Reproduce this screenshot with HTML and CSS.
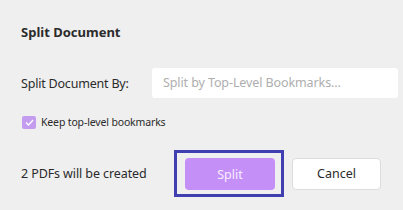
FILE: index.html
```html
<!DOCTYPE html>
<html>
<head>
<meta charset="utf-8">
<link rel="stylesheet" href="styles.css">
</head>
<body>
<div class="dialog">
  <div class="title">Split Document</div>
  <div class="row">
    <div class="label">Split Document By:</div>
    <div class="input">Split by Top-Level Bookmarks...</div>
  </div>
  <div class="check-row">
    <span class="checkbox">
      <svg width="9" height="7" viewBox="0 0 9 7"><path d="M1 3.5 L3.5 6 L8 1" fill="none" stroke="#fff" stroke-width="1.3"/></svg>
    </span>
    <span class="check-label">Keep top-level bookmarks</span>
  </div>
  <div class="footer">
    <div class="info">2 PDFs will be created</div>
    <div class="focus-ring"><button class="btn primary">Split</button></div>
    <button class="btn secondary">Cancel</button>
  </div>
</div>
</body>
</html>
```
FILE: styles.css
```css
html, body {
  margin: 0;
  padding: 0;
  background: #efefef;
  width: 403px;
  height: 210px;
  overflow: hidden;
}
.dialog {
  font-family: "Noto Sans", "Open Sans", sans-serif;
  color: #2b2b2b;
  padding: 0 0 0 21px;
}
.title {
  font-weight: 700;
  font-size: 13px;
  line-height: 18px;
  padding-top: 23px;
}
.row {
  display: flex;
  align-items: center;
  margin-top: 27px;
}
.label {
  font-size: 12.5px;
  letter-spacing: -0.2px;
  width: 131px;
}
.input {
  width: 235px;
  height: 30px;
  background: #fff;
  border-radius: 3px;
  padding-left: 11px;
  box-sizing: content-box;
  font-size: 12.5px;
  letter-spacing: -0.1px;
  line-height: 30px;
  color: #aeaeae;
}
.check-row {
  display: flex;
  align-items: center;
  margin-top: 17px;
  margin-left: 1px;
}
.checkbox {
  width: 14px;
  height: 13px;
  background: #c39cf0;
  border-radius: 2px;
  display: flex;
  align-items: center;
  justify-content: center;
}
.check-label {
  font-size: 10.5px;
  letter-spacing: -0.15px;
  margin-left: 5px;
}
.footer {
  display: flex;
  align-items: center;
  margin-top: 21px;
}
.info {
  font-size: 12.5px;
  letter-spacing: -0.1px;
  width: 153px;
}
.focus-ring {
  border: 3px solid #3f3fb2;
  padding: 5px 6px 4px 8px;
  display: flex;
}
.btn {
  font-family: "Noto Sans", "Open Sans", sans-serif;
  font-size: 12.5px;
  height: 32px;
  width: 90px;
  border-radius: 4px;
  padding: 0;
}
.primary {
  background: #c58ff8;
  color: #f6eefe;
  border: none;
}
.secondary {
  margin-left: 8px;
  background: #fff;
  border: 1px solid #dcdcdc;
  color: #2b2b2b;
  width: 89px;
}
```
